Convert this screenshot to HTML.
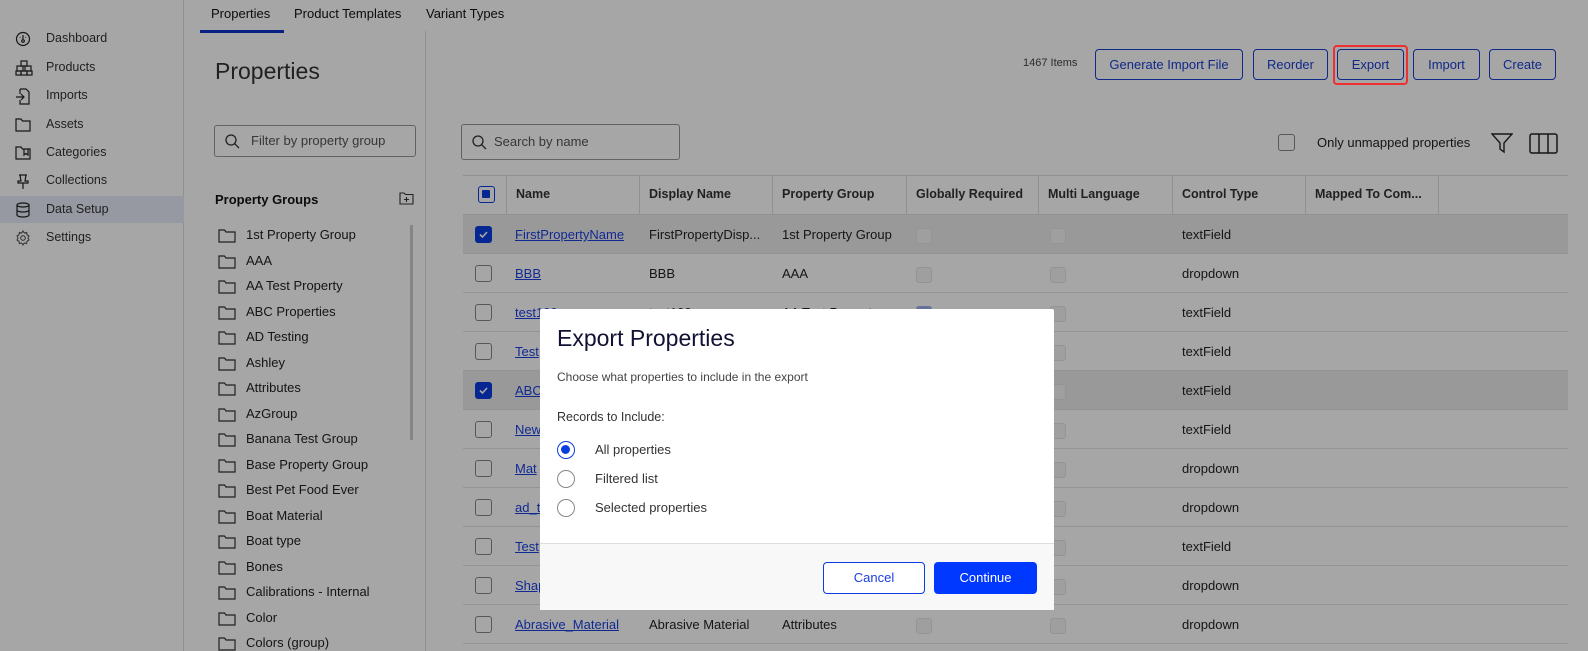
<!DOCTYPE html>
<html><head><meta charset="utf-8"><style>
*{box-sizing:border-box;margin:0;padding:0}
body{width:1588px;height:651px;overflow:hidden;font-family:"Liberation Sans",sans-serif;font-size:13px;color:#222;background:#fff;position:relative}
.abs{position:absolute}
.side{left:0;top:0;width:184px;height:651px;border-right:1px solid #ddd;background:#fff}
.nav{position:absolute;left:0;width:184px;height:27px;line-height:27px;padding-left:46px;color:#333;font-size:12.5px}
.nav svg{position:absolute;left:15px;top:6px}
.tab{top:6px;font-size:13px;color:#111}
.grp{position:absolute;left:218px;font-size:13px;color:#222}
.grp svg{position:absolute;left:0;top:1px}
.grp span{margin-left:28px}
.btn{position:absolute;top:49px;height:31px;border:1px solid #1a3fd0;border-radius:4px;color:#1a3fd0;font-size:13px;text-align:center;line-height:29px;background:#fff}
.row{position:absolute;left:463px;width:1105px;height:39px;border-bottom:1px solid #e3e3e3}
.cell{position:absolute;top:0;line-height:39px;font-size:13px;color:#222;white-space:nowrap}
.cb{position:absolute;left:12px;top:11px;width:17px;height:17px;border:1px solid #888;border-radius:3px;background:#fff}
.cb.on{background:#0a3de0;border-color:#0a3de0}
.mini{position:absolute;top:13px;width:16px;height:16px;border:1px solid #e4e4e4;border-radius:3px;background:#f4f4f4}
a{color:#1a3fe0;text-decoration:underline}
.ov{left:0;top:0;width:1588px;height:651px;background:rgba(0,0,0,0.35)}
</style></head><body>
<div class="abs side">
<div class="nav" style="top:25px;"><svg width="16" height="16" viewBox="0 0 16 16" fill="none" stroke="#222" stroke-width="1.2"><circle cx="8" cy="8" r="6.5"/><circle cx="8" cy="10" r="1.3"/><path d="M8 4v4M5 6l.5.5M11 6l-.5.5"/></svg>Dashboard</div>
<div class="nav" style="top:54px;"><svg width="18" height="16" viewBox="0 0 18 16" fill="none" stroke="#222" stroke-width="1.2"><rect x="6" y="1" width="6" height="5"/><rect x="2" y="6" width="6" height="5"/><rect x="10" y="6" width="6" height="5"/><rect x="1" y="11" width="5" height="4"/><rect x="6" y="11" width="6" height="4"/><rect x="12" y="11" width="5" height="4"/></svg>Products</div>
<div class="nav" style="top:82px;"><svg width="16" height="17" viewBox="0 0 16 17" fill="none" stroke="#222" stroke-width="1.2"><path d="M5 1h6l3 3v12H5v-4M5 6V1"/><path d="M1 9h8M6 6l3 3-3 3"/></svg>Imports</div>
<div class="nav" style="top:111px;"><svg width="16" height="15" viewBox="0 0 16 15" fill="none" stroke="#222" stroke-width="1.2"><path d="M1 2h5l1.5 2H15v10H1z"/></svg>Assets</div>
<div class="nav" style="top:139px;"><svg width="16" height="15" viewBox="0 0 16 15" fill="none" stroke="#222" stroke-width="1.2"><path d="M1 2h5l1.5 2H15v10H1z"/><path d="M9 4v6l2-1.5 2 1.5V4"/></svg>Categories</div>
<div class="nav" style="top:167px;"><svg width="16" height="17" viewBox="0 0 16 17" fill="none" stroke="#222" stroke-width="1.2"><path d="M4 2h8M5 2l1 6H3v2h10V8h-3l1-6M8 10v6"/></svg>Collections</div>
<div class="nav" style="top:196px;background:#e6ebf7;"><svg width="16" height="16" viewBox="0 0 16 16" fill="none" stroke="#222" stroke-width="1.2"><ellipse cx="8" cy="3" rx="6" ry="2"/><path d="M2 3v10c0 1.1 2.7 2 6 2s6-.9 6-2V3M2 8c0 1.1 2.7 2 6 2s6-.9 6-2"/></svg>Data Setup</div>
<div class="nav" style="top:224px;"><svg width="16" height="16" viewBox="0 0 16 16" fill="none" stroke="#555" stroke-width="1.1"><circle cx="8" cy="8" r="2.3"/><path d="M8 1l1.3 2 2.3-.6.4 2.3 2 1.3-1 2 1 2-2 1.3-.4 2.3-2.3-.6L8 15l-1.3-2-2.3.6-.4-2.3-2-1.3 1-2-1-2 2-1.3.4-2.3 2.3.6z"/></svg>Settings</div>
</div>
<div class="abs tab" style="left:211px;">Properties</div>
<div class="abs tab" style="left:294px;">Product Templates</div>
<div class="abs tab" style="left:426px;">Variant Types</div>
<div class="abs" style="left:200px;top:30px;width:84px;height:3px;background:#0a34c9"></div>
<div class="abs" style="left:425px;top:31px;width:1px;height:620px;background:#ddd"></div>
<div class="abs" style="left:215px;top:58px;font-size:23px;color:#333;">Properties</div>
<div class="abs" style="left:214px;top:125px;width:202px;height:32px;border:1px solid #999;border-radius:3px;font-size:13px;color:#555;line-height:30px;padding-left:36px"><svg style="position:absolute;left:10px;top:8px" width="15" height="15" viewBox="0 0 15 15" fill="none" stroke="#333" stroke-width="1.3"><circle cx="6" cy="6" r="5"/><path d="M9.8 9.8l4.2 4.2"/></svg>Filter by property group</div>
<div class="abs" style="left:215px;top:192px;font-size:13px;font-weight:bold;color:#111">Property Groups</div>
<svg class="abs" style="left:399px;top:192px" width="15" height="13" viewBox="0 0 15 13" fill="none" stroke="#333" stroke-width="1.1"><path d="M1 1h4l1.5 1.5H14V12H1z"/><path d="M7.5 5v5M5 7.5h5"/></svg>
<div class="abs" style="left:410px;top:225px;width:3px;height:215px;background:#ccc"></div>
<div id="groups"></div>
<div class="abs" style="left:1023px;top:57px;font-size:11px;color:#444">1467 Items</div>
<div class="btn" style="left:1095px;width:148px;">Generate Import File</div>
<div class="btn" style="left:1253px;width:75px;">Reorder</div>
<div class="btn" style="left:1337px;width:67px;">Export</div>
<div class="btn" style="left:1413px;width:67px;">Import</div>
<div class="btn" style="left:1489px;width:67px;">Create</div>
<div class="abs" style="left:461px;top:124px;width:219px;height:36px;border:1px solid #999;border-radius:3px;font-size:13px;color:#555;line-height:34px;padding-left:32px"><svg style="position:absolute;left:10px;top:10px" width="15" height="15" viewBox="0 0 15 15" fill="none" stroke="#333" stroke-width="1.3"><circle cx="6" cy="6" r="5"/><path d="M9.8 9.8l4.2 4.2"/></svg>Search by name</div>
<div class="abs" style="left:1278px;top:134px;width:17px;height:17px;border:1px solid #888;border-radius:3px;background:#fff"></div>
<div class="abs" style="left:1317px;top:135px;font-size:13px;color:#222">Only unmapped properties</div>
<svg class="abs" style="left:1491px;top:132px" width="22" height="22" viewBox="0 0 22 22" fill="none" stroke="#222" stroke-width="1.4"><path d="M1 2h20l-8 9v9l-4-3v-6z"/></svg>
<svg class="abs" style="left:1529px;top:133px" width="29" height="21" viewBox="0 0 29 21" fill="none" stroke="#222" stroke-width="1.5"><rect x="1" y="1" width="27" height="19" rx="2"/><path d="M10 1v19M19 1v19"/></svg>
<div class="abs" style="left:463px;top:175px;width:1105px;height:40px;border-top:1px solid #ddd;border-bottom:1px solid #ddd"></div>
<div id="tbl"></div>
<div class="abs ov"></div>
<div class="abs" style="left:1333px;top:45px;width:75px;height:40px;border:2px solid #ee3030;border-radius:4px"></div>
<div class="abs" style="left:540px;top:309px;width:514px;height:301px;background:#fff;border-radius:2px">
<div class="abs" style="left:17px;top:16px;font-size:23px;color:#111133">Export Properties</div>
<div class="abs" style="left:17px;top:61px;font-size:12px;color:#444">Choose what properties to include in the export</div>
<div class="abs" style="left:17px;top:101px;font-size:12.5px;color:#333">Records to Include:</div>
<div class="abs" style="left:17px;top:132px;width:18px;height:18px;border:1.5px solid #0a3de0;border-radius:50%"><div style="margin:3px;width:9px;height:9px;border-radius:50%;background:#0a3de0"></div></div>
<div class="abs" style="left:55px;top:133px;font-size:13px;color:#333">All properties</div>
<div class="abs" style="left:17px;top:161px;width:18px;height:18px;border:1px solid #888;border-radius:50%"></div>
<div class="abs" style="left:55px;top:162px;font-size:13px;color:#333">Filtered list</div>
<div class="abs" style="left:17px;top:190px;width:18px;height:18px;border:1px solid #888;border-radius:50%"></div>
<div class="abs" style="left:55px;top:191px;font-size:13px;color:#333">Selected properties</div>
<div class="abs" style="left:0;top:234px;width:514px;height:67px;background:#f8f8f8;border-top:1px solid #ddd"></div>
<div class="abs" style="left:283px;top:253px;width:102px;height:32px;border:1px solid #0a3de0;border-radius:4px;background:#fff;color:#1a3fe0;text-align:center;line-height:30px;font-size:13px">Cancel</div>
<div class="abs" style="left:394px;top:253px;width:103px;height:32px;border-radius:4px;background:#0038ff;color:#fff;text-align:center;line-height:32px;font-size:13px">Continue</div>
</div>
<script>
var g=["1st Property Group","AAA","AA Test Property","ABC Properties","AD Testing","Ashley","Attributes","AzGroup","Banana Test Group","Base Property Group","Best Pet Food Ever","Boat Material","Boat type","Bones","Calibrations - Internal","Color","Colors (group)"];
var h="";g.forEach(function(n,i){h+='<div class="grp" style="top:'+(227+i*25.5)+'px"><svg width="18" height="15" viewBox="0 0 18 15" fill="none" stroke="#333" stroke-width="1.2"><path d="M1 2h5.5l1.5 2H17v10H1z"/></svg><span>'+n+'</span></div>';});
document.getElementById("groups").innerHTML=h;
var cols=[506,639,772,906,1038,1172,1305,1438];
var t='<div class="cell" style="left:478px;top:186px;width:17px;height:17px;border:1.5px solid #0a3de0;border-radius:3px;line-height:0"><div style="margin:3px;width:8px;height:8px;background:#0a3de0;border-radius:1px"></div></div>';
["Name","Display Name","Property Group","Globally Required","Multi Language","Control Type","Mapped To Com..."].forEach(function(c,i){t+='<div class="cell" style="left:'+(cols[i]+10)+'px;top:175px;font-weight:bold;color:#333;font-size:12.5px">'+c+'</div>';});
cols.forEach(function(x){t+='<div class="abs" style="left:'+x+'px;top:176px;width:1px;height:38px;background:#ddd"></div>';});
var rows=[["FirstPropertyName","FirstPropertyDisp...","1st Property Group","textField",1],["BBB","BBB","AAA","dropdown"],["test100","test100","AA Test Property","textField",0,1],["Test","","","textField"],["ABC","","","textField",1],["New","","","textField"],["Mat","","","dropdown"],["ad_t","","","dropdown"],["Test","","","textField"],["Shap","","","dropdown"],["Abrasive_Material","Abrasive Material","Attributes","dropdown"]];
rows.forEach(function(r,i){var y=215+i*39;
t+='<div class="row" style="top:'+y+'px;'+(r[4]?'background:#ececec':'')+'"><div class="cb'+(r[4]?' on':'')+'">'+(r[4]?'<svg width="15" height="15" viewBox="0 0 15 15"><path d="M4 7.5l2.5 2.5 4.5-5" stroke="#fff" stroke-width="1.6" fill="none"/></svg>':'')+'</div>'+
'<div class="cell" style="left:52px"><a>'+r[0]+'</a></div><div class="cell" style="left:186px">'+r[1]+'</div><div class="cell" style="left:319px">'+r[2]+'</div>'+
'<div class="mini" style="left:453px;'+(r[5]?'background:#9db0ee;border-color:#9db0ee':'')+'"></div><div class="mini" style="left:587px"></div><div class="cell" style="left:719px">'+r[3]+'</div></div>';});
document.getElementById("tbl").innerHTML=t;
</script>
</body></html>
